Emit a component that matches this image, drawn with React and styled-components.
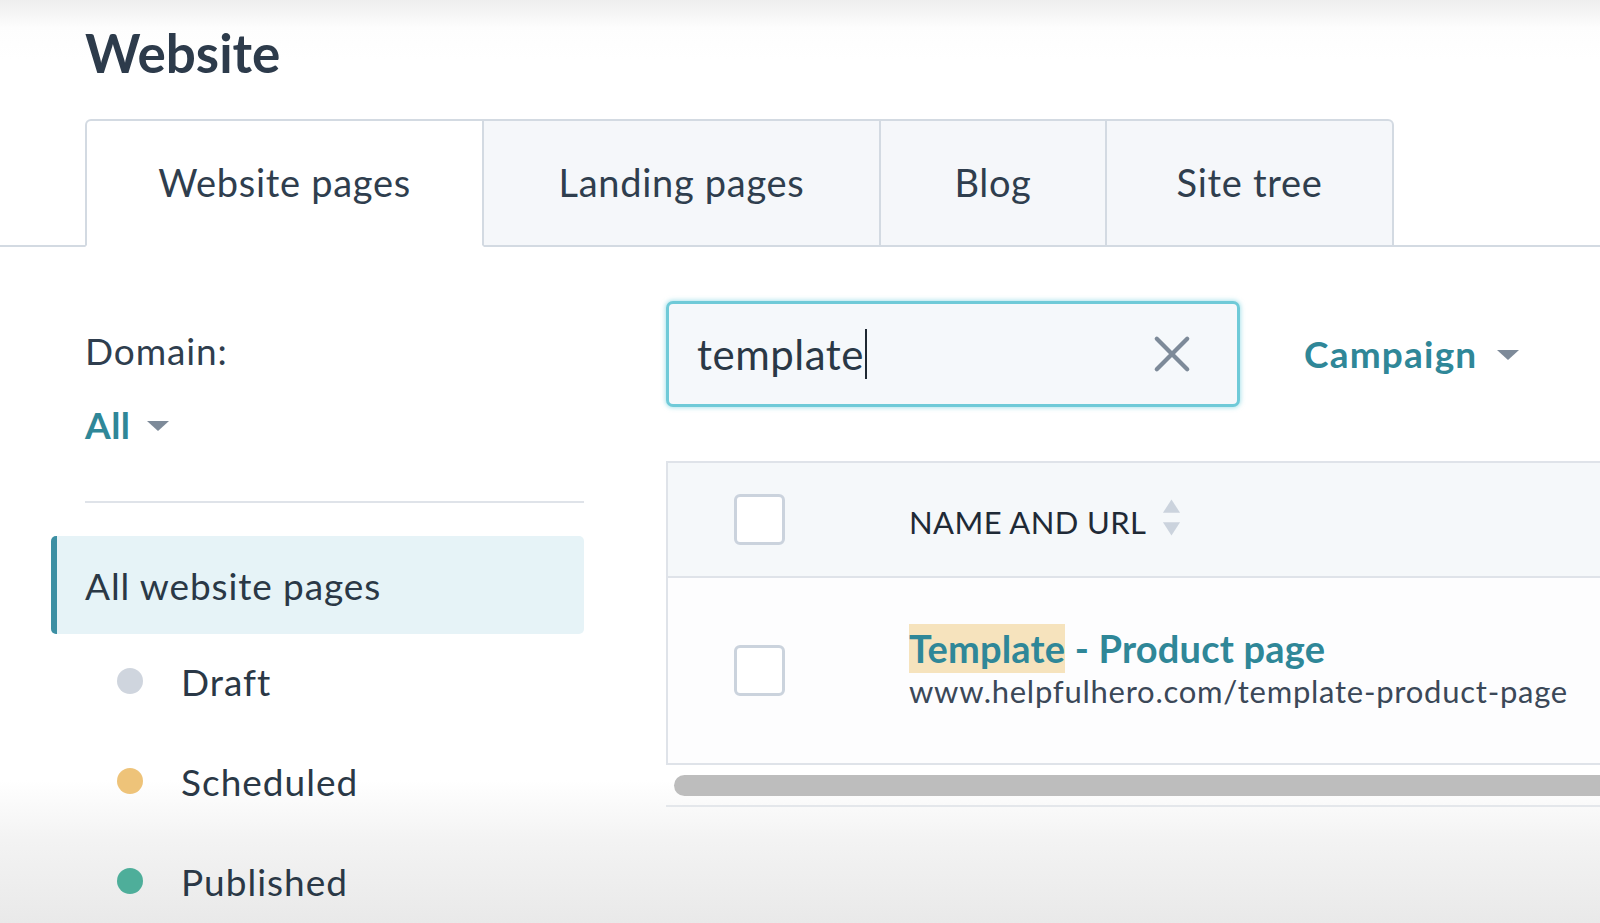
import React from 'react'
import styled, { createGlobalStyle } from 'styled-components'

const GlobalStyle = createGlobalStyle`
  html, body {
    margin: 0;
    padding: 0;
  }
  body {
    width: 1600px;
    height: 923px;
    overflow: hidden;
    font-family: 'Lato', 'Noto Sans', sans-serif;
    color: #33475b;
    background: linear-gradient(
      to bottom,
      #eeeeee 0px,
      #fdfdfd 28px,
      #ffffff 60px,
      #ffffff 780px,
      #f3f3f3 840px,
      #e9e9e9 923px
    );
  }
`

const tabs = ['Website pages', 'Landing pages', 'Blog', 'Site tree']
const tabWidths = [399, 397, 226, 287]

const statuses = [
  { label: 'Draft', color: '#cfd5de' },
  { label: 'Scheduled', color: '#eec379' },
  { label: 'Published', color: '#4eae9a' },
]

const App = () => {
  return (
    <Page>
      <GlobalStyle />
      <Title>Website</Title>

      <TabBar>
        {tabs.map((t, i) => (
          <Tab key={t} $active={i === 0} $first={i === 0} $last={i === tabs.length - 1} $w={tabWidths[i]}>
            {t}
          </Tab>
        ))}
      </TabBar>

      <Body>
        <Sidebar>
          <Label>Domain:</Label>
          <Dropdown>
            All <Caret />
          </Dropdown>
          <Divider />
          <NavItem>All website pages</NavItem>
          {statuses.map((s) => (
            <StatusItem key={s.label}>
              <Dot $color={s.color} />
              {s.label}
            </StatusItem>
          ))}
        </Sidebar>

        <Main>
          <Toolbar>
            <SearchBox>
              <SearchText>
                template<Cursor />
              </SearchText>
              <ClearIcon viewBox="0 0 40 40">
                <path d="M4 4 L36 36 M36 4 L4 36" stroke="#7d8a99" strokeWidth="4.5" strokeLinecap="round" />
              </ClearIcon>
            </SearchBox>
            <Dropdown $inline>
              Campaign <Caret />
            </Dropdown>
          </Toolbar>

          <Table>
            <HeaderRow>
              <Checkbox />
              <HeaderCell>
                NAME AND URL
                <SortIcon viewBox="0 0 20 38">
                  <path d="M10 0 L19 14 L1 14 Z" fill="#cbd3dd" />
                  <path d="M10 38 L19 24 L1 24 Z" fill="#cbd3dd" />
                </SortIcon>
              </HeaderCell>
            </HeaderRow>
            <BodyRow>
              <Checkbox />
              <NameCell>
                <PageLink>
                  <Highlight>Template</Highlight> - Product page
                </PageLink>
                <Url>www.helpfulhero.com/template-product-page</Url>
              </NameCell>
            </BodyRow>
          </Table>
          <ScrollTrack>
            <ScrollThumb />
          </ScrollTrack>
        </Main>
      </Body>
    </Page>
  )
}

export default App

const Page = styled.div`
  width: 1600px;
  height: 923px;
  padding-top: 22px;
  box-sizing: border-box;
`

const Title = styled.h1`
  margin: 0 0 0 85px;
  font-size: 53px;
  line-height: 62px;
  font-weight: 700;
  color: #2d3b4b;
  letter-spacing: 0px;
`

const TabBar = styled.div`
  display: flex;
  margin-top: 35px;
  padding-left: 85px;
  height: 128px;
  box-sizing: border-box;
  border-bottom: 2px solid #d3dae2;
`

const Tab = styled.div`
  width: ${(p) => p.$w}px;
  height: 128px;
  box-sizing: border-box;
  display: flex;
  align-items: center;
  justify-content: center;
  padding-bottom: 2px;
  font-size: 38px;
  letter-spacing: 0.7px;
  color: #2f3e4e;
  background: ${(p) => (p.$active ? '#ffffff' : '#f5f7fa')};
  border-top: 2px solid #d3dae2;
  border-right: 2px solid #d3dae2;
  border-left: ${(p) => (p.$first ? '2px solid #d3dae2' : 'none')};
  border-bottom: ${(p) => (p.$active ? '2px solid #ffffff' : '2px solid #d3dae2')};
  border-top-left-radius: ${(p) => (p.$first ? 6 : 0)}px;
  border-top-right-radius: ${(p) => (p.$last ? 6 : 0)}px;
`

const Body = styled.div`
  display: flex;
  margin-top: 54px;
`

const Sidebar = styled.div`
  width: 499px;
  margin-left: 85px;
  padding-top: 28px;
  display: flex;
  flex-direction: column;
`

const Label = styled.div`
  font-size: 37px;
  line-height: 44px;
  color: #2f3e4e;
  letter-spacing: 0.9px;
`

const Dropdown = styled.div`
  display: flex;
  align-items: center;
  gap: ${(p) => (p.$inline ? 20 : 16)}px;
  font-size: 37px;
  line-height: 44px;
  font-weight: 700;
  letter-spacing: ${(p) => (p.$inline ? 1.2 : 0.5)}px;
  color: #2f8798;
  margin-top: ${(p) => (p.$inline ? 0 : 30)}px;
`

const Caret = styled.span`
  width: 0;
  height: 0;
  border-left: 11px solid transparent;
  border-right: 11px solid transparent;
  border-top: 10px solid #7d8a99;
  margin-top: 2px;
`

const Divider = styled.div`
  height: 2px;
  background: #dfe3e9;
  margin-top: 54px;
`

const NavItem = styled.div`
  margin-top: 33px;
  margin-left: -34px;
  height: 98px;
  display: flex;
  align-items: center;
  padding-left: 28px;
  border-left: 6px solid #3c8fa3;
  border-radius: 5px;
  background: #e6f3f7;
  font-size: 37px;
  color: #2a3846;
  letter-spacing: 0.9px;
`

const StatusItem = styled.div`
  height: 100px;
  box-sizing: border-box;
  padding: 0 0 6px 32px;
  display: flex;
  align-items: center;
  font-size: 37px;
  color: #2a3846;
  letter-spacing: 1px;
`

const Dot = styled.span`
  width: 26px;
  height: 26px;
  border-radius: 50%;
  background: ${(p) => p.$color};
  margin-right: 38px;
`

const Main = styled.div`
  margin-left: 82px;
  flex: 1;
  display: flex;
  flex-direction: column;
`

const Toolbar = styled.div`
  display: flex;
  align-items: center;
  gap: 64px;
`

const SearchBox = styled.div`
  width: 574px;
  height: 106px;
  box-sizing: border-box;
  border: 3px solid #6fcad8;
  border-radius: 7px;
  box-shadow: 0 0 4px 1px rgba(110, 205, 220, 0.55);
  background: #f5f8fb;
  display: flex;
  align-items: center;
  justify-content: space-between;
  padding: 0 46px 0 28px;
`

const SearchText = styled.div`
  display: flex;
  align-items: center;
  font-size: 42px;
  color: #2a3846;
  letter-spacing: 0.5px;
`

const Cursor = styled.span`
  width: 2px;
  height: 50px;
  background: #1e2833;
  margin-left: 1px;
`

const ClearIcon = styled.svg`
  width: 38px;
  height: 38px;
`

const Table = styled.div`
  margin-top: 54px;
  border: 2px solid #dfe3e9;
  border-right: none;
`

const HeaderRow = styled.div`
  height: 113px;
  display: flex;
  align-items: center;
  background: #f5f8fa;
  border-bottom: 2px solid #dfe3e9;
  padding-left: 66px;
`

const Checkbox = styled.span`
  width: 51px;
  height: 51px;
  box-sizing: border-box;
  border: 3px solid #cbd3dd;
  border-radius: 6px;
  background: #ffffff;
  flex-shrink: 0;
`

const HeaderCell = styled.div`
  margin-left: 124px;
  display: flex;
  align-items: center;
  gap: 16px;
  font-size: 31px;
  color: #1f2a36;
  letter-spacing: 0.4px;
  margin-top: 4px;
`

const SortIcon = styled.svg`
  width: 19px;
  height: 37px;
  margin-top: -8px;
`

const BodyRow = styled.div`
  height: 185px;
  display: flex;
  align-items: center;
  padding-left: 66px;
  background: #fdfdfe;
`

const NameCell = styled.div`
  margin-left: 124px;
  display: flex;
  flex-direction: column;
  margin-top: -6px;
`

const PageLink = styled.div`
  font-size: 38px;
  line-height: 46px;
  font-weight: 700;
  letter-spacing: 0.2px;
  color: #2f8798;
  white-space: nowrap;
`

const Highlight = styled.span`
  background: #f6e3bd;
  padding: 1px 0 2px;
`

const Url = styled.div`
  font-size: 31px;
  line-height: 40px;
  letter-spacing: 0.75px;
  color: #3b4858;
  white-space: nowrap;
`

const ScrollTrack = styled.div`
  margin-top: 10px;
  height: 30px;
  border-bottom: 2px solid #e4e7eb;
  padding-left: 8px;
`

const ScrollThumb = styled.div`
  height: 21px;
  border-radius: 11px 0 0 11px;
  background: #bdbdbd;
`
